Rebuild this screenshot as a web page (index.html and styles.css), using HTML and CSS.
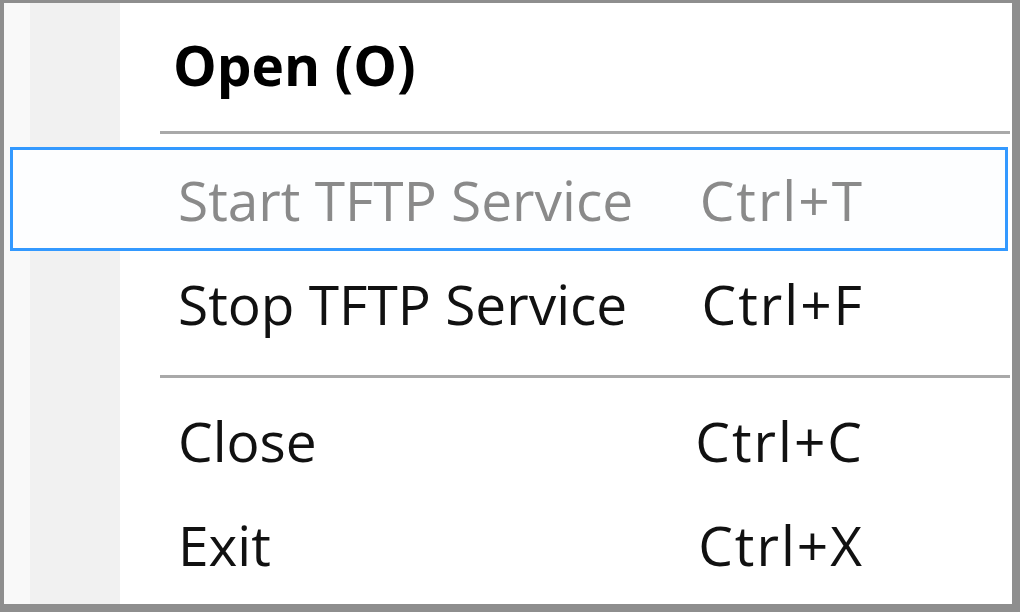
FILE: index.html
```html
<!DOCTYPE html>
<html lang="en">
<head>
    <meta charset="UTF-8">
    <title>TFTP Tray Menu</title>
    <link rel="stylesheet" href="styles.css">
</head>
<body>
    <div class="menu">
        <div class="menu-item default">
            <span class="label">Open (O)</span>
        </div>
        <div class="separator"></div>
        <div class="menu-item disabled hover">
            <span class="label">Start TFTP Service</span>
            <span class="shortcut">Ctrl+T</span>
        </div>
        <div class="menu-item">
            <span class="label">Stop TFTP Service</span>
            <span class="shortcut">Ctrl+F</span>
        </div>
        <div class="separator sep-low"></div>
        <div class="menu-item">
            <span class="label">Close</span>
            <span class="shortcut">Ctrl+C</span>
        </div>
        <div class="menu-item">
            <span class="label">Exit</span>
            <span class="shortcut">Ctrl+X</span>
        </div>
    </div>
</body>
</html>
```

FILE: styles.css
```css
body {
    margin: 0;
    font-family: "Open Sans", "Liberation Sans", sans-serif;
    background-color: #ffffff;
}

.menu {
    width: 1020px;
    height: 612px;
    box-sizing: border-box;
    padding: 9px 4px 0 6px;
    border-style: solid;
    border-color: #8e8e8e;
    border-width: 3px 8px 8px 4px;
    background: linear-gradient(to right,
        #f9f9f9 0, #f9f9f9 26px,
        #f1f1f1 26px, #f1f1f1 116px,
        #ffffff 116px);
    display: flex;
    flex-direction: column;
}

.menu-item {
    height: 104px;
    box-sizing: border-box;
    border: 3px solid transparent;
    padding: 0 141px 0 165px;
    display: flex;
    align-items: center;
    font-size: 55px;
    line-height: 1;
    color: #111111;
}

.menu-item .label {
    flex: 1;
}

.menu-item .shortcut {
    text-align: right;
    letter-spacing: 2px;
}

.menu-item.default {
    font-weight: 700;
    color: #000000;
}

.menu-item.default .label {
    margin-left: -5px;
}

.menu-item.hover {
    border-color: #3399ff;
    background-color: #fdfeff;
}

.menu-item.disabled {
    color: #8a8a8a;
}

.separator {
    height: 3px;
    margin: 15px -2px 13px 150px;
    background-color: #a9a9a9;
}

.separator.sep-low {
    margin-top: 20px;
    margin-bottom: 10px;
}
```
